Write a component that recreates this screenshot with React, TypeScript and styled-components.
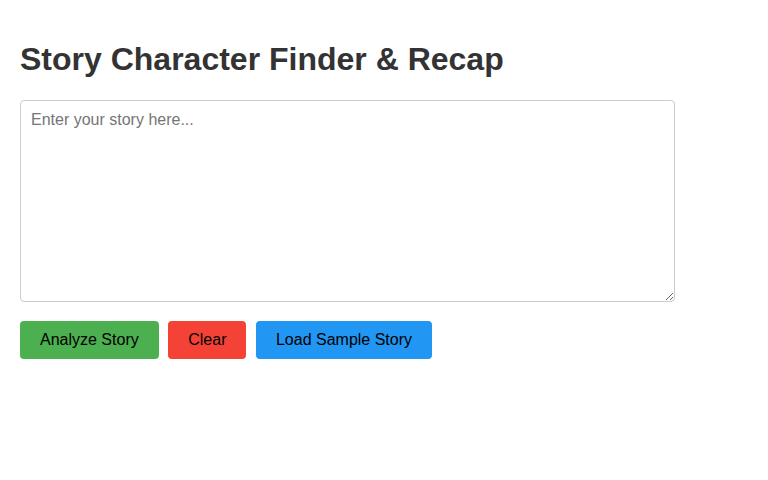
import * as React from "react";
import { useState } from "react";
import styled, { createGlobalStyle } from "styled-components";

const GlobalStyle = createGlobalStyle`
  body {
    margin: 0;
    padding: 20px;
    font-family: "Liberation Sans", Arial, sans-serif;
    background: #ffffff;
  }
`;

const Title = styled.h1`
  font-size: 32px;
  font-weight: bold;
  color: #333333;
  margin: 21.44px 0;
`;

const StoryInput = styled.textarea`
  display: block;
  box-sizing: border-box;
  width: 90%;
  height: 202px;
  padding: 10px;
  border: 1px solid #cccccc;
  border-radius: 4px;
  font-family: "Liberation Sans", Arial, sans-serif;
  font-size: 16px;
  color: #333333;
  margin: 0 0 19px;

  &::placeholder {
    color: #757575;
  }
`;

const ButtonRow = styled.div`
  display: flex;
  gap: 9.5px;
`;

const ActionButton = styled.button<{ $bg: string }>`
  padding: 10px 20px;
  border: none;
  border-radius: 4px;
  background-color: ${(p) => p.$bg};
  color: #000000;
  font-family: "Liberation Sans", Arial, sans-serif;
  font-size: 16px;
  cursor: pointer;
`;

const SAMPLE =
  "Once upon a time, Alice met Bob in the forest. Together they found Charlie, who had lost his map.";

export default function App() {
  const [story, setStory] = useState("");

  return (
    <>
      <GlobalStyle />
      <Title>Story Character Finder &amp; Recap</Title>
      <StoryInput
        placeholder="Enter your story here..."
        value={story}
        onChange={(e) => setStory(e.target.value)}
      />
      <ButtonRow>
        <ActionButton $bg="#4caf50">Analyze Story</ActionButton>
        <ActionButton $bg="#f44336" onClick={() => setStory("")}>
          Clear
        </ActionButton>
        <ActionButton $bg="#2196f3" onClick={() => setStory(SAMPLE)}>
          Load Sample Story
        </ActionButton>
      </ButtonRow>
    </>
  );
}
